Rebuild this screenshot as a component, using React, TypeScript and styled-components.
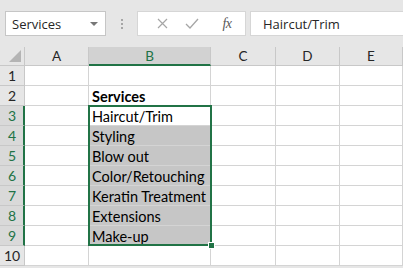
import React from "react";
import styled, { createGlobalStyle } from "styled-components";

const Global = createGlobalStyle`
  html, body { margin: 0; padding: 0; background: #ffffff; overflow: hidden; }
  * { box-sizing: border-box; }
`;

const GREEN = "#217346";
const GRID = "#d4d4d4";

const Page = styled.div`
  width: 403px;
  height: 268px;
  display: flex;
  flex-direction: column;
  background: #e6e6e6;
  font-family: "Lato", "Liberation Sans", sans-serif;
`;

const FormulaBar = styled.div`
  height: 47px;
  display: flex;
  align-items: flex-start;
  padding: 11px 0 0 5px;
  background: #e6e6e6;
`;

const NameBox = styled.div`
  width: 101px;
  height: 25px;
  background: #fff;
  border: 1px solid #c6c6c6;
  display: flex;
  align-items: center;
  justify-content: space-between;
  padding: 0 6px 0 6px;
  font-family: "Open Sans", "Noto Sans", sans-serif;
  font-size: 13px;
  color: #262626;
`;

const Caret = styled.span`
  width: 0;
  height: 0;
  border-left: 4px solid transparent;
  border-right: 4px solid transparent;
  border-top: 4px solid #777;
  margin-right: 1px;
`;

const Grip = styled.div`
  width: 31px;
  height: 25px;
  display: flex;
  flex-direction: column;
  align-items: center;
  justify-content: center;
  gap: 2px;
`;

const Dot = styled.span`
  width: 2px;
  height: 2px;
  background: #a6a6a6;
`;

const ButtonBox = styled.div`
  width: 109px;
  height: 25px;
  background: #fff;
  border: 1px solid #d6d6d6;
  display: flex;
  align-items: center;
  padding-left: 12px;
`;

const IconSlot = styled.div<{ $w: number }>`
  width: ${(p) => p.$w}px;
  height: 23px;
  display: flex;
  align-items: center;
  justify-content: center;
`;

const Fx = styled.span`
  font-family: "Liberation Serif", "DejaVu Serif", serif;
  font-style: italic;
  font-size: 14px;
  color: #595959;
  letter-spacing: -0.5px;
`;

const FormulaInput = styled.div`
  flex: 1;
  margin-left: 4px;
  height: 25px;
  background: #fff;
  border: 1px solid #d6d6d6;
  border-right: none;
  display: flex;
  align-items: center;
  padding-left: 12px;
  font-family: "Open Sans", "Noto Sans", sans-serif;
  font-size: 13px;
  color: #262626;
`;

const Sheet = styled.div`
  position: relative;
  display: grid;
  grid-template-columns: 25px 64px 122px 65px 64px 63px;
  grid-template-rows: 19px repeat(10, 20px);
  background: #fff;
`;

const Corner = styled.div`
  background: #e6e6e6;
  border-right: 1px solid #c8c8c8;
  border-bottom: 1px solid #c8c8c8;
  position: relative;
  &::after {
    content: "";
    position: absolute;
    right: 3px;
    bottom: 3px;
    width: 0;
    height: 0;
    border-left: 12px solid transparent;
    border-bottom: 12px solid #b4b4b4;
  }
`;

const ColHead = styled.div<{ $active?: boolean }>`
  background: ${(p) => (p.$active ? "#d2d2d2" : "#e6e6e6")};
  color: ${(p) => (p.$active ? GREEN : "#262626")};
  border-right: 1px solid #c8c8c8;
  border-bottom: ${(p) => (p.$active ? `2px solid ${GREEN}` : "1px solid #c8c8c8")};
  display: flex;
  align-items: center;
  justify-content: center;
  font-size: 13.5px;
  padding-top: ${(p) => (p.$active ? "1px" : "0")};
`;

const RowHead = styled.div<{ $active?: boolean }>`
  background: ${(p) => (p.$active ? "#d9d9d9" : "#e6e6e6")};
  color: ${(p) => (p.$active ? GREEN : "#262626")};
  border-right: ${(p) => (p.$active ? `2px solid ${GREEN}` : "1px solid #c8c8c8")};
  border-bottom: 1px solid #c8c8c8;
  display: flex;
  align-items: flex-end;
  justify-content: center;
  padding-bottom: 1px;
  padding-left: ${(p) => (p.$active ? "1px" : "0")};
  font-size: 14px;
`;

const Cell = styled.div<{ $fill?: boolean; $bold?: boolean }>`
  background: ${(p) => (p.$fill ? "#c6c6c6" : "#fff")};
  border-right: 1px solid ${GRID};
  border-bottom: 1px solid ${GRID};
  display: flex;
  align-items: flex-end;
  padding: 0 0 0 3px;
  font-size: 14.5px;
  font-weight: ${(p) => (p.$bold ? 700 : 400)};
  color: #000;
  white-space: nowrap;
  overflow: visible;
`;

const Selection = styled.div`
  position: absolute;
  left: 88px;
  top: 58px;
  width: 124px;
  height: 141px;
  border: 2px solid ${GREEN};
  pointer-events: none;
`;

const Handle = styled.div`
  position: absolute;
  right: -5px;
  bottom: -5px;
  width: 7px;
  height: 7px;
  background: ${GREEN};
  border: 1px solid #fff;
`;

const BottomStrip = styled.div`
  flex: 1;
  background: #e6e6e6;
`;

const cols = ["A", "B", "C", "D", "E"];
const bValues: Record<number, string> = {
  2: "Services",
  3: "Haircut/Trim",
  4: "Styling",
  5: "Blow out",
  6: "Color/Retouching",
  7: "Keratin Treatment",
  8: "Extensions",
  9: "Make-up",
};

export default function App() {
  const rows = Array.from({ length: 10 }, (_, i) => i + 1);
  return (
    <>
      <Global />
      <Page>
        <FormulaBar>
          <NameBox>
            <span>Services</span>
            <Caret />
          </NameBox>
          <Grip>
            <Dot />
            <Dot />
            <Dot />
          </Grip>
          <ButtonBox>
            <IconSlot $w={24}>
              <svg width="11" height="11" viewBox="0 0 11 11">
                <path d="M1 1L10 10M10 1L1 10" stroke="#a6a6a6" strokeWidth="1.2" fill="none" />
              </svg>
            </IconSlot>
            <IconSlot $w={36}>
              <svg width="14" height="11" viewBox="0 0 14 11">
                <path d="M1 6L5 10L13 1" stroke="#a6a6a6" strokeWidth="1.3" fill="none" />
              </svg>
            </IconSlot>
            <IconSlot $w={34}>
              <Fx>fx</Fx>
            </IconSlot>
          </ButtonBox>
          <FormulaInput>Haircut/Trim</FormulaInput>
        </FormulaBar>
        <Sheet>
          <Corner />
          {cols.map((c) => (
            <ColHead key={c} $active={c === "B"}>
              {c}
            </ColHead>
          ))}
          {rows.map((r) => (
            <React.Fragment key={r}>
              <RowHead $active={r >= 3 && r <= 9}>{r}</RowHead>
              {cols.map((c) => (
                <Cell
                  key={c}
                  $fill={c === "B" && r >= 4 && r <= 9}
                  $bold={c === "B" && r === 2}
                >
                  {c === "B" ? bValues[r] ?? "" : ""}
                </Cell>
              ))}
            </React.Fragment>
          ))}
          <Selection>
            <Handle />
          </Selection>
        </Sheet>
        <BottomStrip />
      </Page>
    </>
  );
}
